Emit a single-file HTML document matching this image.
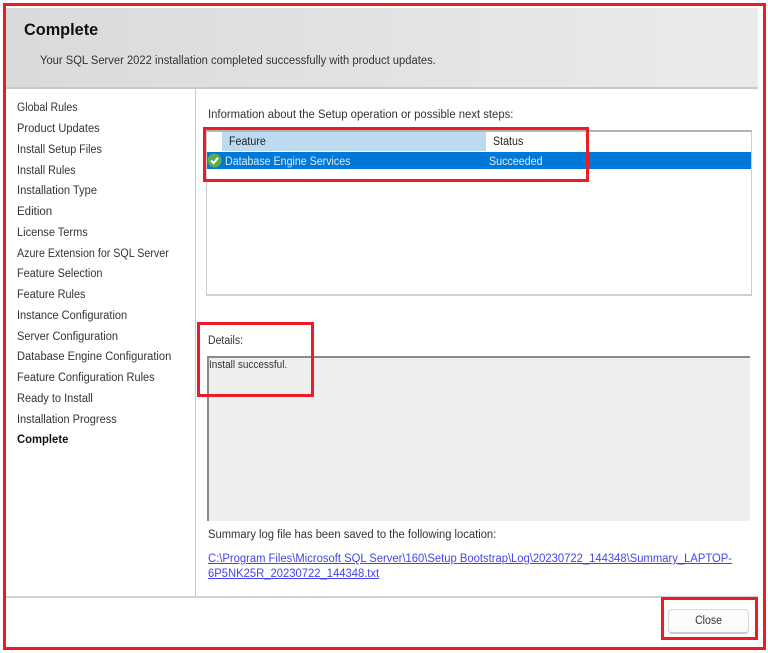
<!DOCTYPE html>
<html>
<head>
<meta charset="utf-8">
<style>
html,body{margin:0;padding:0;background:#fff}
#p{position:relative;width:768px;height:653px;overflow:hidden;background:#fff;font-family:"Liberation Sans",sans-serif;font-size:11.5px;color:#333}
#p div,#p a{position:absolute;white-space:nowrap;box-sizing:border-box}
.t{line-height:14px;filter:blur(.3px);transform-origin:0 50%}
.r{border:3px solid #ed1c24;background:transparent}
.l{left:17px}
a{color:#4444ee;text-decoration:underline}
</style>
</head>
<body>
<div id="p">
<div style="left:6px;top:8px;width:752px;height:81px;background:linear-gradient(90deg,#d9dadc,#ebebeb);border-bottom:2px solid #c9c9c9"></div>
<div class="t" style="left:24px;top:21px;font-size:16.3px;font-weight:bold;line-height:18px;color:#111">Complete</div>
<div class="t" style="left:40px;top:54px;transform:scaleX(.974)">Your SQL Server 2022 installation completed successfully with product updates.</div>

<div style="left:195px;top:89px;width:1px;height:508px;background:#c9c9c9"></div>
<div style="left:6px;top:596px;width:752px;height:2px;background:#d2d2d4"></div>

<div class="t l" style="top:101px;transform:scaleX(.92)">Global Rules</div>
<div class="t l" style="top:122px;transform:scaleX(.965)">Product Updates</div>
<div class="t l" style="top:143px;transform:scaleX(.935)">Install Setup Files</div>
<div class="t l" style="top:164px;transform:scaleX(.935)">Install Rules</div>
<div class="t l" style="top:184px;transform:scaleX(.965)">Installation Type</div>
<div class="t l" style="top:205px">Edition</div>
<div class="t l" style="top:226px;transform:scaleX(.957)">License Terms</div>
<div class="t l" style="top:247px;transform:scaleX(.93)">Azure Extension for SQL Server</div>
<div class="t l" style="top:267px;transform:scaleX(.948)">Feature Selection</div>
<div class="t l" style="top:288px;transform:scaleX(.948)">Feature Rules</div>
<div class="t l" style="top:309px;transform:scaleX(.957)">Instance Configuration</div>
<div class="t l" style="top:330px;transform:scaleX(.957)">Server Configuration</div>
<div class="t l" style="top:350px;transform:scaleX(.965)">Database Engine Configuration</div>
<div class="t l" style="top:371px;transform:scaleX(.957)">Feature Configuration Rules</div>
<div class="t l" style="top:392px;transform:scaleX(.957)">Ready to Install</div>
<div class="t l" style="top:413px;transform:scaleX(.957)">Installation Progress</div>
<div class="t l" style="top:433px;font-weight:bold;color:#111;transform:scaleX(.98)">Complete</div>

<div class="t" style="left:208px;top:108px;transform:scaleX(.983)">Information about the Setup operation or possible next steps:</div>

<div style="left:206px;top:130px;width:546px;height:166px;background:#fff;border:1px solid #cfcfd1;border-top:2px solid #b4b4b8;border-bottom:2px solid #cfcfd1"></div>
<div style="left:222px;top:132px;width:264px;height:19px;background:#bcdaf0"></div>
<div style="left:207px;top:152px;width:544px;height:17px;background:#0078d7"></div>
<div class="t" style="left:229px;top:135px;color:#222;transform:scaleX(.93)">Feature</div>
<div class="t" style="left:493px;top:135px;color:#222;transform:scaleX(.93)">Status</div>
<div class="t" style="left:225px;top:155px;color:#dcecf9;transform:scaleX(.926)">Database Engine Services</div>
<div class="t" style="left:489px;top:155px;color:#dcecf9;transform:scaleX(.93)">Succeeded</div>
<svg style="position:absolute;left:207px;top:153px" width="15" height="15" viewBox="0 0 15 15"><circle cx="7.5" cy="7.5" r="7" fill="#5cab52"/><path d="M4 7.5l2.5 2.6L11 4.8" fill="none" stroke="#fff" stroke-width="2"/></svg>

<div class="t" style="left:208px;top:334px;transform:scaleX(.913)">Details:</div>
<div style="left:207px;top:356px;width:543px;height:165px;background:#eeeeee;border-top:2px solid #8a8a8a;border-left:2px solid #8a8a8a"></div>
<div class="t" style="left:209px;top:358px;font-size:11px;transform:scaleX(.907)">Install successful.</div>

<div class="t" style="left:208px;top:528px;transform:scaleX(.974)">Summary log file has been saved to the following location:</div>
<a class="t" style="left:208px;top:552px;transform:scaleX(.977)" href="#">C:\Program Files\Microsoft SQL Server\160\Setup Bootstrap\Log\20230722_144348\Summary_LAPTOP-</a>
<a class="t" style="left:208px;top:567px;transform:scaleX(.977)" href="#">6P5NK25R_20230722_144348.txt</a>

<div style="left:668px;top:609px;width:81px;height:25px;background:#fbfbfb;border:1px solid #d8d8d8;border-bottom:2px solid #cccccc;border-radius:4px"></div>
<div class="t" style="left:668px;top:614px;width:81px;text-align:center;transform-origin:50% 50%;transform:scaleX(.913)">Close</div>

<div class="r" style="left:3px;top:3px;width:763px;height:647px"></div>
<div class="r" style="left:203px;top:127px;width:386px;height:55px"></div>
<div class="r" style="left:197px;top:322px;width:117px;height:75px"></div>
<div class="r" style="left:661px;top:597px;width:97px;height:43px"></div>
</div>
</body>
</html>
